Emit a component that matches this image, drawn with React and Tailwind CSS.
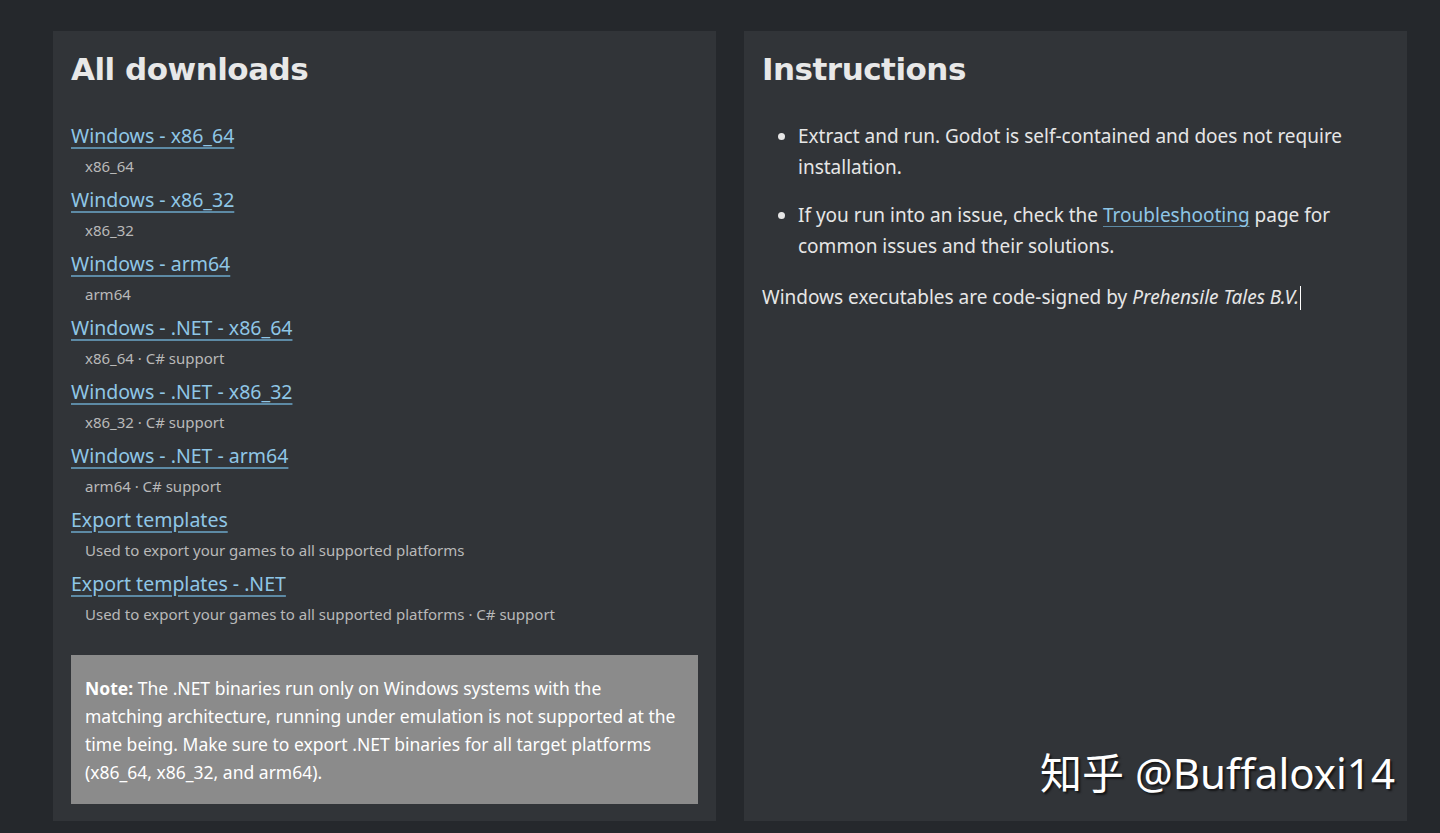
const downloads = [
  { name: "Windows - x86_64", sub: "x86_64" },
  { name: "Windows - x86_32", sub: "x86_32" },
  { name: "Windows - arm64", sub: "arm64" },
  { name: "Windows - .NET - x86_64", sub: "x86_64 · C# support" },
  { name: "Windows - .NET - x86_32", sub: "x86_32 · C# support" },
  { name: "Windows - .NET - arm64", sub: "arm64 · C# support" },
  { name: "Export templates", sub: "Used to export your games to all supported platforms" },
  { name: "Export templates - .NET", sub: "Used to export your games to all supported platforms · C# support" },
];

const body = { fontFamily: '"Noto Sans", "Open Sans", sans-serif' };
const heading = { fontFamily: '"DejaVu Sans", "Open Sans", sans-serif' };

export default function App() {
  return (
    <div className="relative flex h-[833px] w-[1440px] gap-[28px] bg-[#25282c] pl-[53px] pt-[31px] pb-3 text-[#e6e6e6]" style={body}>
      <section className="flex w-[663px] shrink-0 flex-col bg-[#313438] px-[18px] pt-[20px]">
        <h2 className="text-[31px] font-bold leading-[36px] tracking-[-0.5px] text-[#e8e8e8]" style={heading}>
          All downloads
        </h2>
        <div className="mt-[34px] flex flex-col">
          {downloads.map((d) => (
            <div key={d.name} className="flex h-[64px] flex-col">
              <a className="w-fit text-[19.5px] leading-[30px] text-[#8fc6e6] underline decoration-[#5d8aa5] decoration-2 underline-offset-4" href="#">
                {d.name}
              </a>
              <span className="pl-[14px] text-[15px] leading-[30px] text-[#b9b9b9]">{d.sub}</span>
            </div>
          ))}
        </div>
        <div className="mt-[22px] bg-[#8b8b8b] px-[14px] pt-[19px] pb-[18px] text-[17.5px] leading-[28px] whitespace-nowrap text-white">
          <b>Note:</b> The .NET binaries run only on Windows systems with the
          <br />
          matching architecture, running under emulation is not supported at the
          <br />
          time being. Make sure to export .NET binaries for all target platforms
          <br />
          (x86_64, x86_32, and arm64).
        </div>
      </section>

      <section className="flex w-[663px] shrink-0 flex-col bg-[#313438] px-[18px] pt-[20px]">
        <h2 className="text-[31px] font-bold leading-[36px] tracking-[-0.5px] text-[#e8e8e8]" style={heading}>
          Instructions
        </h2>
        <ul className="mt-[34px] flex list-disc flex-col gap-[17px] pl-[36px] text-[19px] leading-[31px]">
          <li>Extract and run. Godot is self-contained and does not require installation.</li>
          <li>
            If you run into an issue, check the{" "}
            <a className="text-[#8fc6e6] underline decoration-[#5d8aa5] underline-offset-4" href="#">
              Troubleshooting
            </a>{" "}
            page for common issues and their solutions.
          </li>
        </ul>
        <p className="mt-[20px] flex items-center text-[19px] leading-[31px]">
          <span>
            Windows executables are code-signed by <i>Prehensile Tales B.V.</i>
          </span>
          <span className="ml-[1px] inline-block h-[24px] w-px bg-white" />
        </p>
      </section>

      <div
        className="absolute left-[1040px] top-[745px] text-[42px] leading-[56px] text-white [text-shadow:2px_2px_2px_rgba(0,0,0,0.6)]"
        style={{ fontFamily: '"Noto Sans", "Noto Sans CJK SC", sans-serif' }}
      >
        知乎 @Buffaloxi14
      </div>
    </div>
  );
}
